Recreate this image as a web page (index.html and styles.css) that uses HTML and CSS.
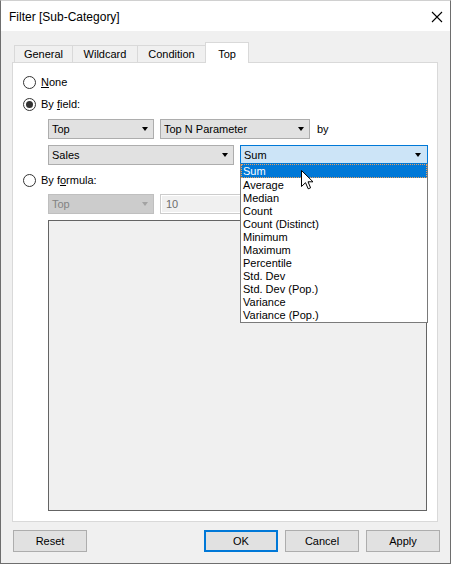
FILE: index.html
```html
<!DOCTYPE html>
<html>
<head>
<meta charset="utf-8">
<link rel="stylesheet" href="styles.css">
</head>
<body>
<div class="window">
  <div class="titlebar">
    <span class="title">Filter [Sub-Category]</span>
    <svg class="close" width="12" height="12" viewBox="0 0 12 12"><path d="M1 1 L11 11 M11 1 L1 11" stroke="#000" stroke-width="1.1" fill="none"/></svg>
  </div>
  <div class="body">
    <div class="tabs">
      <div class="tab t-general">General</div>
      <div class="tab t-wildcard">Wildcard</div>
      <div class="tab t-condition">Condition</div>
      <div class="tab t-top active">Top</div>
    </div>
    <div class="panel">
      <div class="radio-row r-none"><span class="radio"></span><span><u>N</u>one</span></div>
      <div class="radio-row r-field"><span class="radio checked"></span><span>By <u>f</u>ield:</span></div>
      <div class="field-row row1">
        <div class="combo w-top"><span>Top</span><i class="arrow"></i></div>
        <div class="combo w-param"><span>Top N Parameter</span><i class="arrow"></i></div>
        <span class="by">by</span>
      </div>
      <div class="field-row row2">
        <div class="combo w-sales"><span>Sales</span><i class="arrow"></i></div>
        <div class="combo-wrap">
          <div class="combo focused w-sum"><span>Sum</span><i class="arrow"></i></div>
          <div class="listbox">
            <div class="item selected">Sum</div>
            <div class="item">Average</div>
            <div class="item">Median</div>
            <div class="item">Count</div>
            <div class="item">Count (Distinct)</div>
            <div class="item">Minimum</div>
            <div class="item">Maximum</div>
            <div class="item">Percentile</div>
            <div class="item">Std. Dev</div>
            <div class="item">Std. Dev (Pop.)</div>
            <div class="item">Variance</div>
            <div class="item">Variance (Pop.)</div>
          </div>
        </div>
      </div>
      <div class="radio-row r-formula"><span class="radio"></span><span>By f<u>o</u>rmula:</span></div>
      <div class="field-row row3">
        <div class="combo disabled w-top"><span>Top</span><i class="arrow"></i></div>
        <div class="textbox w-param">10</div>
      </div>
      <div class="formula-area"></div>
    </div>
    <div class="buttons">
      <div class="btn">Reset</div>
      <div class="spacer"></div>
      <div class="btn default">OK</div>
      <div class="btn">Cancel</div>
      <div class="btn">Apply</div>
    </div>
  </div>
  <svg class="cursor" width="13" height="20" viewBox="0 0 13 20"><path d="M0.5 0.5 L0.5 16.5 L4.5 12.7 L7.2 18.8 L9.6 17.8 L7 11.8 L12 11.8 Z" fill="#fff" stroke="#000" stroke-width="1" stroke-linejoin="miter"/></svg>
</div>
</body>
</html>
```
FILE: styles.css
```css
* { box-sizing: border-box; }
html, body { margin: 0; padding: 0; background: #fff; }
body {
  font-family: "Liberation Sans", Arial, sans-serif;
  font-size: 11px;
  color: #000;
}
.window {
  position: relative;
  width: 451px;
  height: 564px;
  background: #f0f0f0;
  border: 1px solid #6e6e6e;
  border-top-color: #d0d0d0;
  overflow: hidden;
}
.titlebar {
  height: 30px;
  background: #fff;
  display: flex;
  align-items: center;
  justify-content: space-between;
  padding: 0 7px 0 8px;
  font-size: 12px;
}
.title { padding-top: 1px; }
.close { margin-top: 1px; }
.body {
  padding: 11px 0 0 11px;
}
.tabs {
  display: flex;
  align-items: flex-end;
  height: 20px;
  margin-left: 2px;
}
.tab {
  height: 17px;
  border: 1px solid #d9d9d9;
  border-bottom: none;
  background: #f0f0f0;
  display: flex;
  align-items: center;
  justify-content: center;
  margin-left: -1px;
}
.t-general { width: 59px; margin-left: 0; }
.t-wildcard { width: 66px; }
.t-condition { width: 69px; }
.t-top { width: 44px; }
.tab.active {
  height: 21px;
  background: #fff;
  margin-bottom: -1px;
  position: relative;
  z-index: 1;
  padding-top: 1px;
}
.panel {
  width: 426px;
  height: 460px;
  background: #fff;
  border: 1px solid #d9d9d9;
  display: flex;
  flex-direction: column;
  padding-top: 11px;
}
.radio-row {
  display: flex;
  align-items: center;
  height: 16px;
  padding-left: 10px;
  gap: 5px;
}
.radio {
  width: 13px;
  height: 13px;
  border: 1px solid #333;
  border-radius: 50%;
  background: #fff;
  display: flex;
  align-items: center;
  justify-content: center;
}
.radio.checked::after {
  content: "";
  width: 7px;
  height: 7px;
  border-radius: 50%;
  background: #333;
}
.r-field { margin-top: 6px; }
.r-formula { margin-top: 7px; }
.field-row {
  display: flex;
  align-items: flex-start;
  padding-left: 35px;
  gap: 6px;
}
.row1 { margin-top: 7px; }
.row2 { margin-top: 6px; }
.row3 { margin-top: 6px; }
.combo {
  height: 20px;
  background: #e1e1e1;
  border: 1px solid #adadad;
  display: flex;
  align-items: center;
  justify-content: space-between;
  padding: 0 5px 0 3px;
}
.arrow {
  width: 0;
  height: 0;
  border-left: 3.5px solid transparent;
  border-right: 3.5px solid transparent;
  border-top: 4px solid #000;
}
.w-top { width: 106px; }
.w-param { width: 150px; }
.w-sales { width: 186px; }
.w-sum { width: 188px; }
.by { line-height: 20px; margin-left: 1px; }
.combo-wrap { position: relative; }
.combo.focused {
  height: 19px;
  background: #cce4f7;
  border-color: #0078d7;
  padding-right: 6px;
}
.listbox {
  position: absolute;
  left: 0;
  top: 18px;
  width: 188px;
  background: #fff;
  border: 1px solid #7a7a7a;
  border-top: 1px solid #0078d7;
  z-index: 2;
}
.item {
  height: 13px;
  line-height: 13px;
  padding-left: 2px;
}
.item.selected {
  background: #0078d7;
  color: #fff;
  border: 1px dotted #e8a060;
  height: 14px;
  line-height: 12px;
  padding-left: 1px;
  margin-bottom: 1px;
}
.combo.disabled {
  background: #cccccc;
  border-color: #bfbfbf;
  color: #838383;
}
.combo.disabled .arrow { border-top-color: #a3a3a3; }
.textbox {
  height: 20px;
  border: 1px solid #cccccc;
  box-shadow: inset 0 0 0 1px #fff;
  background: #f0f0f0;
  color: #6d6d6d;
  padding-left: 5px;
  line-height: 18px;
}
.formula-area {
  margin: 6px 0 0 35px;
  width: 379px;
  height: 291px;
  border: 1px solid #646464;
  background: #f0f0f0;
}
.buttons {
  display: flex;
  margin-top: 8px;
  padding-left: 1px;
  width: 428px;
  gap: 7px;
}
.spacer { flex: 1; }
.btn {
  width: 74px;
  height: 22px;
  background: #e1e1e1;
  border: 1px solid #adadad;
  display: flex;
  align-items: center;
  justify-content: center;
}
.btn.default {
  border: 2px solid #0078d7;
}
.cursor {
  position: absolute;
  left: 300px;
  top: 169px;
  z-index: 5;
}
```
